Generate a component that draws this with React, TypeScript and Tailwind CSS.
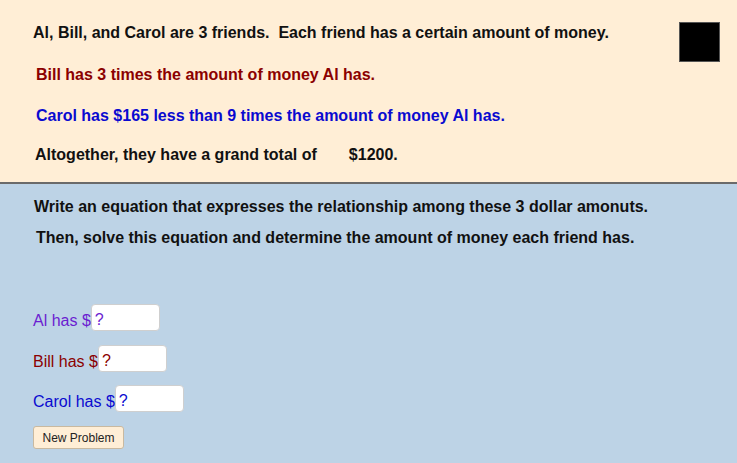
import React from 'react';

const answers = [
  { name: 'Al', color: 'text-[#6b1dd1]', gap: '' },
  { name: 'Bill', color: 'text-[#8b0000]', gap: 'mt-[14px]' },
  { name: 'Carol', color: 'text-[#0a0ad0]', gap: 'mt-[13px]' },
];

const App: React.FC = () => {
  return (
    <div className="w-[737px] h-[463px] overflow-hidden font-['Liberation_Sans',Arial,sans-serif]">
      <div className="h-[182px] bg-[#ffeed6] flex justify-between">
        <div className="font-bold text-[16px] leading-[16px] text-[#111]">
          <div className="mt-[25px] ml-[33px] whitespace-pre">
            Al, Bill, and Carol are 3 friends.  Each friend has a certain amount of money.
          </div>
          <div className="mt-[26px] ml-[36px] text-[#8b0000]">
            Bill has 3 times the amount of money Al has.
          </div>
          <div className="mt-[25px] ml-[36px] text-[#0a0ad0]">
            Carol has $165 less than 9 times the amount of money Al has.
          </div>
          <div className="mt-[23px] ml-[35px] flex">
            <span>Altogether, they have a grand total of</span>
            <span className="ml-[32px]">$1200.</span>
          </div>
        </div>
        <div className="mt-[22px] mr-[17px] w-[41px] h-[40px] shrink-0 bg-black border border-[#555]" />
      </div>
      <div className="h-[2px] bg-[#6a6a6a]" />
      <div className="h-[279px] bg-[#bdd3e6]">
        <div className="font-bold text-[16px] leading-[16px] text-[#111]">
          <div className="pt-[15px] ml-[34px]">
            Write an equation that expresses the relationship among these 3 dollar amonuts.
          </div>
          <div className="mt-[15px] ml-[36px]">
            Then, solve this equation and determine the amount of money each friend has.
          </div>
        </div>
        <div className="ml-[33px] mt-[58px] flex flex-col">
          {answers.map((a) => (
            <div key={a.name} className={`flex items-center ${a.gap}`}>
              <span className={`text-[16px] leading-[18px] pt-[6px] ${a.color}`}>{a.name} has $</span>
              <div
                className={`w-[69px] h-[27px] shrink-0 bg-white border border-[#cfcfcf] rounded-[4px] flex items-center pl-[3px] pt-[5px] text-[16px] ${a.color}`}
              >
                ?
              </div>
            </div>
          ))}
          <button className="mt-[14px] w-[91px] h-[23px] bg-[#ffeed6] border border-[#c9b9a0] rounded-[3px] text-[12px] text-[#222] flex items-center justify-center">
            New Problem
          </button>
        </div>
      </div>
    </div>
  );
};

export default App;
